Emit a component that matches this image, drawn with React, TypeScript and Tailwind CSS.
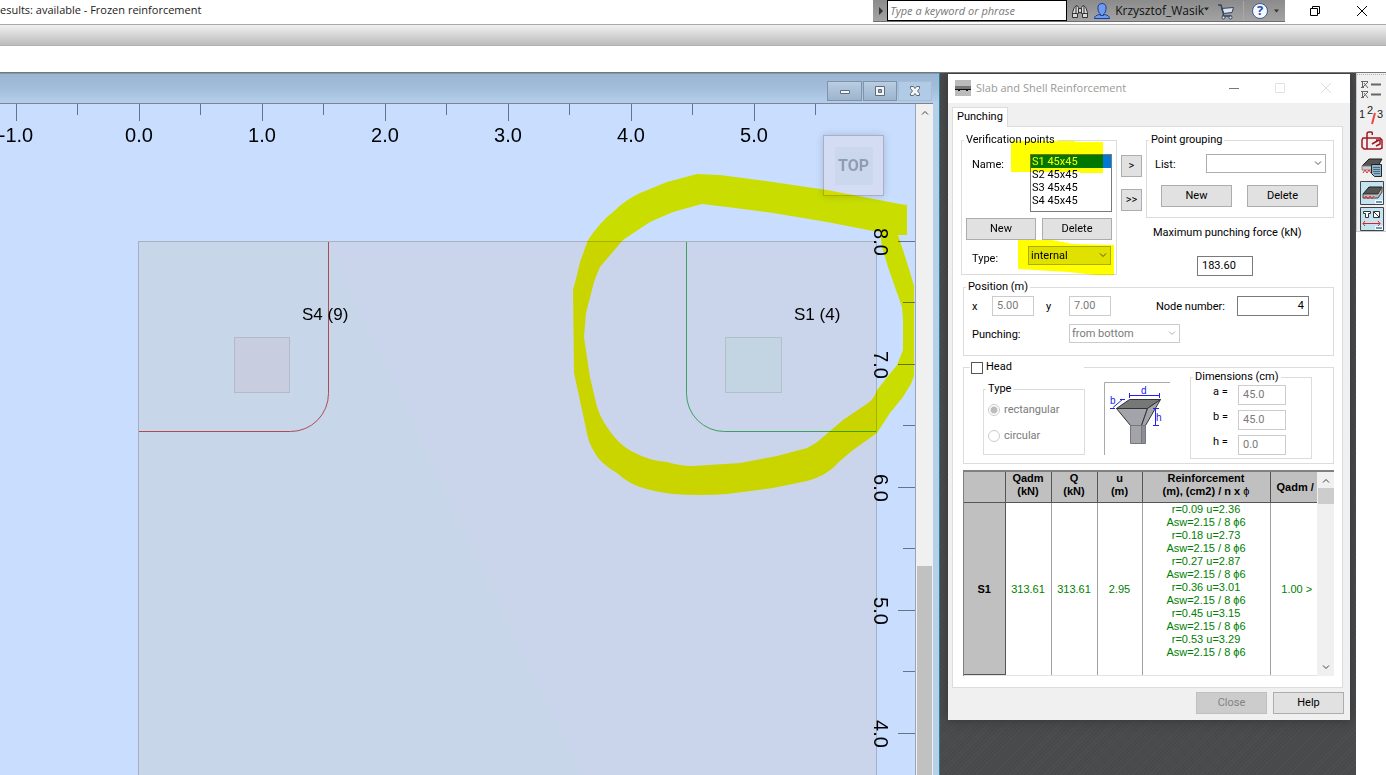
import { useState } from "react";
import type { ReactNode } from "react";
import clsx from "clsx";

const points = ["S1 45x45", "S2 45x45", "S3 45x45", "S4 45x45"];

const reinforcement = [
  { r: "0.09", u: "2.36" },
  { r: "0.18", u: "2.73" },
  { r: "0.27", u: "2.87" },
  { r: "0.36", u: "3.01" },
  { r: "0.45", u: "3.15" },
  { r: "0.53", u: "3.29" },
];

// one metre of the model is 123 units on screen
const columns = [-1, 0, 1, 2, 3, 4, 5].map((value) => ({
  label: value.toFixed(1),
  x: Math.round(139 + value * 122.9),
}));
const rows = [8, 7, 6, 5, 4].map((value) => ({
  label: value.toFixed(1),
  y: Math.round(242 + (8 - value) * 122.9),
}));

function Group({
  title,
  className,
  children,
}: {
  title: ReactNode;
  className?: string;
  children: ReactNode;
}) {
  return (
    <fieldset className={clsx("min-w-0 border border-[#dcdcdc]", className)}>
      <legend className="ml-0.5 h-3.5 bg-white px-0.5 leading-[14px]">
        {title}
      </legend>
      {children}
    </fieldset>
  );
}

function PushButton({
  className,
  disabled,
  children,
}: {
  className?: string;
  disabled?: boolean;
  children: ReactNode;
}) {
  return (
    <button
      type="button"
      disabled={disabled}
      className={clsx(
        "h-[22px] border",
        disabled
          ? "border-[#bfbfbf] bg-[#cccccc] text-[#838383]"
          : "border-[#adadad] bg-[#e1e1e1]",
        className,
      )}
    >
      {children}
    </button>
  );
}

function Chevron({ className, up }: { className?: string; up?: boolean }) {
  return (
    <svg
      viewBox="0 0 8 6"
      className={clsx("pointer-events-none h-1.5 w-2", className)}
      fill="none"
      stroke="currentColor"
    >
      <path d={up ? "M1 4.5 4 1.5 7 4.5" : "M1 1.5 4 4.5 7 1.5"} />
    </svg>
  );
}

function Dropdown({
  id,
  options,
  className,
  disabled,
  gray,
}: {
  id: string;
  options: string[];
  className?: string;
  disabled?: boolean;
  gray?: boolean;
}) {
  return (
    <span className={clsx("relative inline-block h-[19px]", className)}>
      <select
        id={id}
        disabled={disabled}
        className={clsx(
          "block h-full w-full appearance-none border px-0.5 leading-none disabled:opacity-100",
          gray ? "border-[#adadad] bg-[#e1e1e1]" : "bg-white",
          disabled ? "border-[#cccccc] text-[#7a7a7a]" : "border-[#adadad]",
        )}
      >
        {options.map((option) => (
          <option key={option}>{option}</option>
        ))}
      </select>
      <Chevron
        className={clsx(
          "absolute top-1.5 right-1",
          disabled ? "text-[#b0b0b0]" : "text-[#555555]",
        )}
      />
    </span>
  );
}

function NumberBox({
  id,
  value,
  className,
  disabled,
}: {
  id: string;
  value: string;
  className?: string;
  disabled?: boolean;
}) {
  return (
    <input
      id={id}
      defaultValue={value}
      disabled={disabled}
      className={clsx(
        "h-5 border bg-white px-1 pb-0.5",
        disabled ? "border-[#cccccc] text-[#7a7a7a]" : "border-[#7a7a7a]",
        className,
      )}
    />
  );
}

function TitleBar() {
  return (
    <header className="flex h-6 shrink-0 items-start bg-white font-['Open_Sans','Noto_Sans',sans-serif] text-xs text-[#222222]">
      <h1 className="grow text-[11px] leading-5 whitespace-nowrap">
        esults: available - Frozen reinforcement
      </h1>
      <div className="flex h-[22px] items-center border-b border-[#6f6f6f] bg-linear-to-b from-[#8b8b8b] to-[#a3a3a3]">
        <button type="button" aria-label="Collapse search" className="w-3.5 pl-1">
          <svg viewBox="0 0 8 8" className="size-2" fill="#333333">
            <path d="M2 0 6 4 2 8Z" />
          </svg>
        </button>
        <input
          aria-label="Search"
          placeholder="Type a keyword or phrase"
          className="h-[21px] w-[180px] border border-black bg-white px-0.5 text-[11px] italic placeholder:text-[#777777]"
        />
        <button type="button" aria-label="Find" className="ml-1">
          <svg viewBox="0 0 18 18" className="size-[18px]" fill="#d8d8d8" stroke="#333333">
            <path d="M5 3.500q-2 1-3.500 7v5h5v-4h1v-6q-.5-2-2.500-2ZM13 3.500q2 1 3.500 7v5h-5v-4h-1v-6q.5-2 2.500-2Z" />
            <path d="M7.500 6.500h3v4h-3ZM1.500 11.500h5M11.500 11.500h5M5 4v7M13 4v7" />
          </svg>
        </button>
        <button type="button" className="ml-1 flex items-center gap-1 text-[#111111]">
          <svg viewBox="0 0 18 18" className="size-[18px]" fill="#6d9bf0" stroke="#1f3f8f">
            <path d="M1.500 16.500c0-2.500 2-3.500 5.500-4h4c3.500.5 5.500 1.500 5.500 4Z" />
            <path d="M9 1.500c-3 0-4.500 2-4 5.500.3 2.500 1 4 2.500 5v1.500h3V12c1.500-1 2.200-2.500 2.500-5 .5-3.500-1-5.500-4-5.500Z" />
          </svg>
          Krzysztof_Wasik
          <svg viewBox="0 0 5 3" className="mb-1 -ml-1 h-1 w-[5px]" fill="#222222">
            <path d="M0 0h5L2.500 3Z" />
          </svg>
        </button>
        <button type="button" aria-label="Store" className="ml-2">
          <svg viewBox="0 0 18 18" className="size-[18px]" fill="none" stroke="#33435f">
            <path d="M4.500 6.500 16.500 5.500 15 10.500 6.500 11.500Z" fill="#dde4f0" />
            <path d="M1 3h3L6.500 11.500l-.5 2.500h8.500" strokeWidth="1.500" />
            <circle cx="6.500" cy="15.500" r="1.500" fill="#dde4f0" />
            <circle cx="13.500" cy="15.500" r="1.500" fill="#dde4f0" />
          </svg>
        </button>
        <span className="ml-2 h-5 w-px bg-[#a9a9a9]" />
        <button type="button" aria-label="Help" className="ml-2 flex items-center gap-1.5 pr-1.5">
          <span className="flex size-4 items-center justify-center rounded-full border border-[#3c5a96] bg-[#f4f7fc] text-[13px] leading-none font-bold text-[#2450a8]">
            ?
          </span>
          <svg viewBox="0 0 5 3" className="h-1 w-[5px]" fill="#333333">
            <path d="M0 0h5L2.500 3Z" />
          </svg>
        </button>
      </div>
      <div className="flex h-[22px] w-[101px] items-center justify-between pr-[18px] pl-6">
        <button type="button" aria-label="Restore">
          <svg viewBox="0 0 12 12" className="size-3" fill="none" stroke="#000000">
            <path d="M1.500 3.500h7v7h-7ZM3.500 3.500v-2h7v7h-2" />
          </svg>
        </button>
        <button type="button" aria-label="Close window">
          <svg viewBox="0 0 12 12" className="size-3" fill="none" stroke="#000000">
            <path d="m1 1 10 10M11 1 1 11" />
          </svg>
        </button>
      </div>
    </header>
  );
}

function Drawing() {
  return (
    <div className="relative isolate min-w-0 grow overflow-hidden bg-[#c9deff]">
      <svg
        viewBox="0 104 915 671"
        preserveAspectRatio="xMaxYMin slice"
        className="absolute inset-0 h-full w-full font-['Liberation_Sans',Arial,sans-serif]"
        shapeRendering="crispEdges"
        fill="none"
      >
        <rect x="138.500" y="241.500" width="738" height="600" fill="#cad5ec" stroke="#a7b0bf" />
        <path d="M139 242H328L582 775H139Z" fill="#c8d6ea" />
        <rect x="234.500" y="337.500" width="55" height="55" fill="#c8cde0" stroke="#b3b9c9" />
        <rect x="725.500" y="337.500" width="56" height="55" fill="#c3d5e2" stroke="#b1bfca" />
        <path
          d="M328.500 242V393.500A38 38 0 0 1 290.500 431.500H139"
          stroke="#b04a58"
          shapeRendering="auto"
        />
        <path
          d="M686.500 242V393.500A38 38 0 0 0 724.500 431.500H876"
          stroke="#3f9f5c"
          shapeRendering="auto"
        />
        <g stroke="#66748a">
          {columns.map((tick) => (
            <path key={tick.x} d={`M${tick.x + 0.5} 104v17m61-17v11`} />
          ))}
          {rows.map((tick) => (
            <path key={tick.y} d={`M898 ${tick.y - 0.5}h17m-12 61h12`} />
          ))}
        </g>
        <g fill="#000000" fontSize="20" textAnchor="middle">
          {columns.map((tick) => (
            <text key={tick.x} x={tick.x} y="142">
              {tick.label}
            </text>
          ))}
          {rows.map((tick) => (
            <text key={tick.y} transform={`translate(874 ${tick.y}) rotate(90)`}>
              {tick.label}
            </text>
          ))}
        </g>
        <g fill="#000000" fontSize="17">
          <text x="302" y="320">
            S4 (9)
          </text>
          <text x="794" y="320">
            S1 (4)
          </text>
        </g>
      </svg>
      <button
        type="button"
        className="absolute top-[31px] right-[31px] flex size-[61px] items-center justify-center border border-[#a9b0c4] bg-[#d3dcf2] shadow-[0_0_8px_#a9b9d8]"
      >
        <span className="flex size-[38px] items-center justify-center bg-[#cbd7ec] font-['Roboto','Noto_Sans',sans-serif] text-base font-bold text-[#8f9db3]">
          TOP
        </span>
      </button>
      <svg
        viewBox="0 104 915 671"
        preserveAspectRatio="xMaxYMin slice"
        className="pointer-events-none absolute inset-0 h-full w-full mix-blend-multiply"
        fill="#ffff00"
        fillRule="evenodd"
      >
        <path d="M907 205V235H898L903 250 910 272 914 286V376L911 384 903 397 890 413 877 433 853 450 840 461Q827 476 807 481L773 488 727 494Q700 496 673 494 655 492 640 487 628 483 617 473 606 467 598 458 590 446 588 438L582 410 574 373 573 290 577 275 580 262 588 240Q600 222 613 212 625 200 640 193L667 182 697 174 720 175 773 182 827 190 900 204ZM880 232 873 231 827 222 773 213 727 207 702 204 673 212 650 222 623 240 600 267Q594 280 592 290L586 313 584 337 590 377 597 407Q602 423 617 440 625 448 633 452 650 461 667 462 680 466 693 466L740 463 777 456 807 448Q817 443 823 437L843 420 868 403Q874 399 877 390L897 365 903 350V320L902 307 896 290 888 267 882 247Z" />
      </svg>
    </div>
  );
}

function ViewWindow() {
  return (
    <section
      aria-label="View"
      className="flex min-w-0 grow flex-col border-t border-r border-t-[#8296ae] border-r-[#2b7d92] bg-[#b7d0ea]"
    >
      <div className="flex h-[29px] shrink-0 items-start justify-end gap-px bg-linear-to-b from-[#9ab6d4] via-[#a3bdda] to-[#b4cfeb] pt-[7px] pr-[7px] text-[#5d6b7c]">
        <button
          type="button"
          aria-label="Minimize view"
          className="flex h-5 w-[35px] items-center justify-center border border-[#8193a9] bg-linear-to-b from-[#b9cde3] to-[#9cb4cd]"
        >
          <svg viewBox="0 0 12 12" className="size-3" fill="#f5f5f5" stroke="currentColor">
            <path d="M1.500 5.500h9v3h-9Z" />
          </svg>
        </button>
        <button
          type="button"
          aria-label="Maximize view"
          className="flex h-5 w-[34px] items-center justify-center border border-[#8193a9] bg-linear-to-b from-[#b9cde3] to-[#9cb4cd]"
        >
          <svg viewBox="0 0 12 12" className="size-3" fill="#f5f5f5" stroke="currentColor">
            <path d="M1.500 1.500h9v9h-9Z" />
            <path d="M4.500 4.500h3v3h-3Z" fill="#8fa9c5" />
          </svg>
        </button>
        <button
          type="button"
          aria-label="Close view"
          className="flex h-5 w-[34px] items-center justify-center border border-[#a7bdd6] bg-[#b1cae6]"
        >
          <svg viewBox="0 0 12 12" className="size-3" fill="#f5f5f5" stroke="currentColor">
            <path d="M1.500 1.500h3L6 3.500l1.500-2h3v2L8.500 6l2 2.500v2h-3L6 8.500l-1.500 2h-3v-2L3.500 6l-2-2.500Z" />
          </svg>
        </button>
      </div>
      <div className="mr-1.5 flex min-h-0 grow border-t border-[#7c8494]">
        <Drawing />
        <div className="flex w-[18px] shrink-0 flex-col border-l border-[#9aa6b8] bg-[#f0f0f0]">
          <Chevron up className="mx-auto mt-1.5 text-[#404040]" />
          <div className="mt-[450px] mr-px ml-px grow bg-[#c1c1c1]" />
        </div>
      </div>
    </section>
  );
}

function VerificationPoints() {
  return (
    <div className="relative isolate w-[156px]">
      <Group title="Verification points" className="pb-2">
        <div className="mt-[7px] flex pl-2.5">
          <label htmlFor="name" className="w-[58px] pt-1">
            Name:
          </label>
          <select
            id="name"
            size={4}
            defaultValue={points[0]}
            className="h-[58px] w-[82px] overflow-hidden border border-[#7a7a7a] bg-white"
          >
            {points.map((point) => (
              <option
                key={point}
                className="h-[13px] min-h-0 px-px py-0 leading-[13px] checked:bg-linear-to-r checked:from-[#0078d7] checked:to-[#0078d7] checked:[-webkit-text-fill-color:white]"
              >
                {point}
              </option>
            ))}
          </select>
        </div>
        <div className="mt-1.5 flex gap-1.5 pl-1">
          <PushButton className="w-[70px]">New</PushButton>
          <PushButton className="w-[70px]">Delete</PushButton>
        </div>
        <div className="mt-1.5 flex items-start pl-2.5">
          <label htmlFor="type" className="w-14 pt-1.5">
            Type:
          </label>
          <Dropdown id="type" options={["internal", "edge", "corner"]} className="w-[83px]" gray />
        </div>
      </Group>
      <svg
        viewBox="961 133 156 144"
        className="pointer-events-none absolute top-0 left-0 h-36 w-[156px] mix-blend-multiply"
        fill="#ffff00"
      >
        <path d="M1011 141h64v1h28v31h-23v-1h-69ZM1018 240h34l21 4 41 1v30h-18l-28-3-50-3Z" />
      </svg>
    </div>
  );
}

function PointGrouping() {
  return (
    <div className="flex min-w-0 grow flex-col">
      <Group title="Point grouping" className="h-[85px]">
        <div className="mt-[7px] flex pl-2">
          <label htmlFor="list" className="w-[51px] pt-1">
            List:
          </label>
          <Dropdown id="list" options={[""]} className="mr-[7px] grow" />
        </div>
        <div className="mt-3 flex justify-between pr-[15px] pl-3.5">
          <PushButton className="w-[71px]">New</PushButton>
          <PushButton className="w-[71px]">Delete</PushButton>
        </div>
      </Group>
      <label htmlFor="force" className="mt-2 pl-[7px]">
        Maximum punching force (kN)
      </label>
      <NumberBox id="force" value="183.60" className="mt-4 ml-[51px] w-14" />
    </div>
  );
}

function Position() {
  return (
    <Group title="Position (m)" className="mt-1 ml-0.5 h-[76px]">
      <div className="mt-0.5 flex pl-2">
        <label htmlFor="x" className="w-5 pt-1">
          x
        </label>
        <NumberBox id="x" value="5.00" className="w-[42px]" disabled />
        <label htmlFor="y" className="w-[35px] pt-1 pl-3">
          y
        </label>
        <NumberBox id="y" value="7.00" className="w-[42px]" disabled />
        <label htmlFor="node" className="grow pt-1 text-right">
          Node number:
        </label>
        <NumberBox id="node" value="4" className="mr-6 ml-3 w-[72px] text-right" />
      </div>
      <div className="mt-2 flex pl-2">
        <label htmlFor="punching" className="w-[97px] pt-1">
          Punching:
        </label>
        <Dropdown
          id="punching"
          options={["from bottom", "from top"]}
          className="w-[111px]"
          disabled
        />
      </div>
    </Group>
  );
}

function Radio({ id, label, checked }: { id: string; label: string; checked?: boolean }) {
  return (
    <div className="flex h-[26px] items-center gap-1 pl-1 text-[#7a7a7a]">
      <input
        id={id}
        type="radio"
        name="shape"
        defaultChecked={checked}
        disabled
        className="size-3 appearance-none rounded-full border border-[#cccccc] checked:bg-[radial-gradient(circle,#bcbcbc_3px,white_4px)]"
      />
      <label htmlFor={id}>{label}</label>
    </div>
  );
}

function HeadSection() {
  const [head, setHead] = useState(false);

  return (
    <fieldset className="mt-1 ml-0.5 h-[104px] border border-[#dcdcdc]">
      <legend className="ml-1.5 flex h-3.5 w-[114px] items-end gap-[3px] bg-white pl-px">
        <input
          id="head"
          type="checkbox"
          checked={head}
          onChange={(event) => setHead(event.target.checked)}
          className="size-3 appearance-none border border-[#555555] bg-white checked:bg-[#0078d7]"
        />
        <label htmlFor="head">Head</label>
      </legend>
      <div className="-mt-1 flex items-start pr-[21px] pl-[19px]">
        <Group title="Type" className="mt-3 h-[73px] w-[102px] pt-px">
          <Radio id="rectangular" label="rectangular" checked />
          <Radio id="circular" label="circular" />
        </Group>
        <svg viewBox="0 0 66 73" className="mt-3 ml-[19px] h-[73px] w-[66px]" fill="none">
          <path d="M.5 73V.5H66" stroke="#aaaaaa" />
          <g stroke="#333333">
            <path d="M12.500 26.500 25.500 17.500H56.500L43.500 26.500Z" fill="#777777" />
            <path d="M12.500 26.500H43.500L37.500 43.500H26.500Z" fill="#a3a3aa" />
            <path d="M43.500 26.500 56.500 17.500 41.500 43.500H37.500Z" fill="#a3a3aa" />
            <path d="M26.500 43.500h12v18h-12Z" fill="#a3a3aa" stroke="#777777" />
            <path d="M37.500 43.500h4v18h-4Z" fill="#8c8c9b" stroke="#777777" />
          </g>
          <g stroke="#2222ee">
            <path d="M25.500 11v5M55.500 11v5M25 13.500h31M9 25.500 19 17M6 26.500h5M16 17.500h5M51.500 27v16M49 26.500h6M49 43.500h6" />
          </g>
          <g
            fill="#2222ee"
            fontSize="10"
            className="font-['Liberation_Sans',Arial,sans-serif]"
          >
            <text x="37" y="12">
              d
            </text>
            <text x="6" y="22">
              b
            </text>
            <text x="52" y="39">
              h
            </text>
          </g>
        </svg>
        <Group title="Dimensions (cm)" className="ml-auto h-[89px] w-[122px]">
          <div className="flex flex-col gap-[5px] pt-px">
            {[
              ["a", "45.0"],
              ["b", "45.0"],
              ["h", "0.0"],
            ].map(([name, value]) => (
              <div key={name} className="flex pl-[22px]">
                <label htmlFor={`dim-${name}`} className="w-[25px]">
                  {name} =
                </label>
                <NumberBox id={`dim-${name}`} value={value} className="w-12" disabled />
              </div>
            ))}
          </div>
        </Group>
      </div>
    </fieldset>
  );
}

function ResultsTable() {
  return (
    <div className="mt-1.5 ml-0.5 flex h-[206px] border-t-2 border-l border-[#808080] font-['Liberation_Sans',Arial,sans-serif]">
      <div className="min-w-0 grow overflow-hidden border-b border-[#e3e3e3]">
        <table className="h-[203px] w-[353px] table-fixed border-collapse text-center">
          <thead className="bg-[#c0c0c0] leading-[13px]">
            <tr className="h-[30px]">
              <th className="w-[41px] border-r border-b border-[#555555]" />
              <th className="w-[46px] border-r border-b border-[#555555] pb-1">
                Qadm
                <br />
                (kN)
              </th>
              <th className="w-[46px] border-r border-b border-[#555555] pb-1">
                Q
                <br />
                (kN)
              </th>
              <th className="w-[45px] border-r border-b border-[#555555] pb-1">
                u
                <br />
                (m)
              </th>
              <th className="w-32 border-r border-b border-[#555555] pb-1">
                Reinforcement
                <br />
                (m), (cm2) / n x <span className="font-normal">ϕ</span>
              </th>
              <th className="border-b border-[#555555] pl-1.5 text-left whitespace-nowrap">
                Qadm /
              </th>
            </tr>
          </thead>
          <tbody className="text-[#008000]">
            <tr>
              <th className="border-r border-b border-[#555555] bg-[#c0c0c0] text-black">S1</th>
              <td className="border-r border-[#a0a0a0]">313.61</td>
              <td className="border-r border-[#a0a0a0]">313.61</td>
              <td className="border-r border-[#a0a0a0]">2.95</td>
              <td className="border-r border-[#a0a0a0] align-top leading-[13px]">
                {reinforcement.map((row) => (
                  <div key={row.r}>
                    r={row.r} u={row.u}
                    <br />
                    Asw=2.15 / 8 ϕ6
                  </div>
                ))}
              </td>
              <td className="pl-1.5 whitespace-nowrap">1.00 &gt;</td>
            </tr>
          </tbody>
        </table>
      </div>
      <div className="flex w-[17px] shrink-0 flex-col items-center bg-[#f0f0f0] py-1.5 text-[#404040]">
        <Chevron up />
        <div className="mt-1 h-4 w-4 bg-[#cdcdcd]" />
        <Chevron className="mt-auto" />
      </div>
    </div>
  );
}

function ReinforcementDialog() {
  return (
    <section
      aria-labelledby="dialog-title"
      className="flex w-[402px] flex-col bg-[#f0f0f0] font-['Roboto','Noto_Sans',sans-serif] text-[11px] leading-[14px] text-black shadow-[0_0_10px_#333333]"
    >
      <div className="flex h-[29px] items-center bg-white pr-[19px] pb-px pl-[7px] text-[#999999]">
        <svg viewBox="0 0 16 16" className="size-4">
          <path d="M0 0h16v16H0Z" fill="#bbbbbb" />
          <path d="M0 6h16v3H0Z" fill="#777777" />
          <path d="M0 9h16v1H0ZM3 10h2v1H3ZM11 10h2v1h-2Z" fill="#111111" />
        </svg>
        <h2
          id="dialog-title"
          className="grow pl-[5px] font-['Open_Sans','Noto_Sans',sans-serif] text-[11px]"
        >
          Slab and Shell Reinforcement
        </h2>
        <div className="flex gap-9">
          <button type="button" aria-label="Minimize">
            <svg viewBox="0 0 10 10" className="size-2.5" stroke="#777777">
              <path d="M0 5.500h10" />
            </svg>
          </button>
          <button type="button" aria-label="Maximize">
            <svg viewBox="0 0 10 10" className="size-2.5" fill="none" stroke="#e3e3e3">
              <path d="M.5.5h9v9h-9Z" />
            </svg>
          </button>
          <button type="button" aria-label="Close dialog">
            <svg viewBox="0 0 10 10" className="size-2.5" stroke="#dddddd">
              <path d="m0 0 10 10M10 0 0 10" />
            </svg>
          </button>
        </div>
      </div>
      <div className="pt-1 pr-[7px] pb-1.5 pl-1">
        <div role="tablist" className="flex">
          <button
            type="button"
            role="tab"
            aria-selected="true"
            className="-mb-px h-5 border border-b-0 border-[#dcdcdc] bg-white px-1 pb-0.5"
          >
            Punching
          </button>
        </div>
        <div role="tabpanel" className="border border-[#dcdcdc] bg-white px-2 pt-1.5 pb-[11px]">
          <div className="flex gap-1">
            <VerificationPoints />
            <div className="flex w-[21px] flex-col gap-3 pt-[22px]">
              <PushButton>&gt;</PushButton>
              <PushButton>&gt;&gt;</PushButton>
            </div>
            <PointGrouping />
          </div>
          <Position />
          <HeadSection />
          <ResultsTable />
        </div>
        <div className="-mr-px flex justify-end gap-1.5 pt-1">
          <PushButton className="w-[71px]" disabled>
            Close
          </PushButton>
          <PushButton className="w-[71px]">Help</PushButton>
        </div>
      </div>
    </section>
  );
}

function SideToolbar() {
  return (
    <aside className="w-[30px] shrink-0 bg-white">
      <div className="flex flex-col items-center gap-0.5 border-b border-l border-[#c8c8c8] bg-[#f0f0f0]">
        <div className="mt-px w-full border-t border-dotted border-[#b0b0b0]" />
        <button type="button" aria-label="Attributes">
          <svg viewBox="0 0 24 24" className="size-6" fill="none" stroke="#666666">
            <path d="M1 4.500h7M1 10.500h3M2.500 5v6M8 5 3 10M4 6l4 5" />
            <path d="M1 14.500h7M1 20.500h3M2.500 15v6M8 15l-5 5M4 16l4 5" />
            <path d="M11 7.500h10M11 17.500h10" strokeWidth="2" />
          </svg>
        </button>
        <button type="button" aria-label="Numbering">
          <svg
            viewBox="0 0 24 24"
            className="size-6 font-['Liberation_Sans',Arial,sans-serif]"
            fill="#222222"
            fontSize="11"
          >
            <path d="M15 10 12 21" stroke="#ee4444" strokeWidth="2" />
            <text x="-1" y="15">
              1
            </text>
            <text x="7" y="11">
              2
            </text>
            <text x="17" y="15">
              3
            </text>
          </svg>
        </button>
        <button type="button" aria-label="Reinforcement sketch">
          <svg
            viewBox="0 0 24 24"
            className="size-6"
            fill="none"
            stroke="#a01820"
            strokeWidth="1.500"
          >
            <path d="M7 20V5q0-2 2-2h2q2 0 1 3M3 9h17l2 2v8l-2 1H4l-2-2v-7ZM12 15l7-4M16 11h4v4l-4 2" />
          </svg>
        </button>
        <button type="button" aria-label="Slab report">
          <svg viewBox="0 0 24 24" className="size-6">
            <path d="M2 11 9 4h13l-4 7Z" fill="#555555" stroke="#222222" />
            <path d="M2 11h16v4H2Z" fill="#cccccc" stroke="#888888" />
            <path d="m3 18 2-3 2 3 2-3 2 3 2-3" fill="none" stroke="#dd3333" />
            <path d="M11.500 9.500h10v12h-7l-3-3Z" fill="#8fb3cc" stroke="#222222" />
            <path d="M13 12.500h7M13 14.500h7M13 16.500h7M14 18.500h6" stroke="#4a6a80" />
          </svg>
        </button>
        <button type="button" aria-label="Slab view">
          <svg viewBox="0 0 24 24" className="size-6">
            <path d="M.5.5h23v23H.5Z" fill="#c5e4f2" stroke="#444444" />
            <path d="M3 13 9 6h13l-4 7Z" fill="#555555" stroke="#222222" />
            <path d="M18 13 22 6v5l-4 6H3v-4Z" fill="#bbbbbb" stroke="#444444" />
            <path d="m4 18 2-3 2 3 2-3 2 3 2-3" fill="none" stroke="#dd3333" />
            <path d="M15.500 19.500h7v3h-7Z" fill="#5b9cc4" stroke="#ffffff" />
          </svg>
        </button>
        <button type="button" aria-label="Dimension view">
          <svg viewBox="0 0 24 24" className="size-6">
            <path d="M.5.5h23v23H.5Z" fill="#c5e4f2" stroke="#444444" />
            <path
              d="M3.500 4.500h7v2h-2v4h-3v-4h-2ZM13.500 4.500h6v6h-6Z"
              fill="#ffffff"
              stroke="#333333"
            />
            <path d="m14 5 5 5" stroke="#333333" />
            <path
              d="M3 16.500h17M5 14l-2 2.500L5 19M18 14l2 2.500-2 2.500"
              fill="none"
              stroke="#dd2222"
            />
            <path d="M15.500 19.500h7v3h-7Z" fill="#5b9cc4" stroke="#ffffff" />
          </svg>
        </button>
      </div>
    </aside>
  );
}

export default function App() {
  return (
    <div className="flex h-screen flex-col overflow-hidden bg-white">
      <TitleBar />
      <div className="h-[22px] shrink-0 border-t border-b border-t-[#a8a8a8] border-b-[#b0b0b0] bg-linear-to-b from-[#f0f0f0] to-[#bcbcbc]" />
      <div className="h-[26px] shrink-0 bg-white" />
      <main className="flex min-h-0 grow border-t border-[#777777]">
        <ViewWindow />
        <div className="shrink-0 overflow-hidden bg-[repeating-linear-gradient(135deg,#48494b_0px,#48494b_2px,#4d4e50_2px,#4d4e50_3px)] pt-px pr-1.5 pl-2">
          <ReinforcementDialog />
        </div>
        <SideToolbar />
      </main>
    </div>
  );
}
